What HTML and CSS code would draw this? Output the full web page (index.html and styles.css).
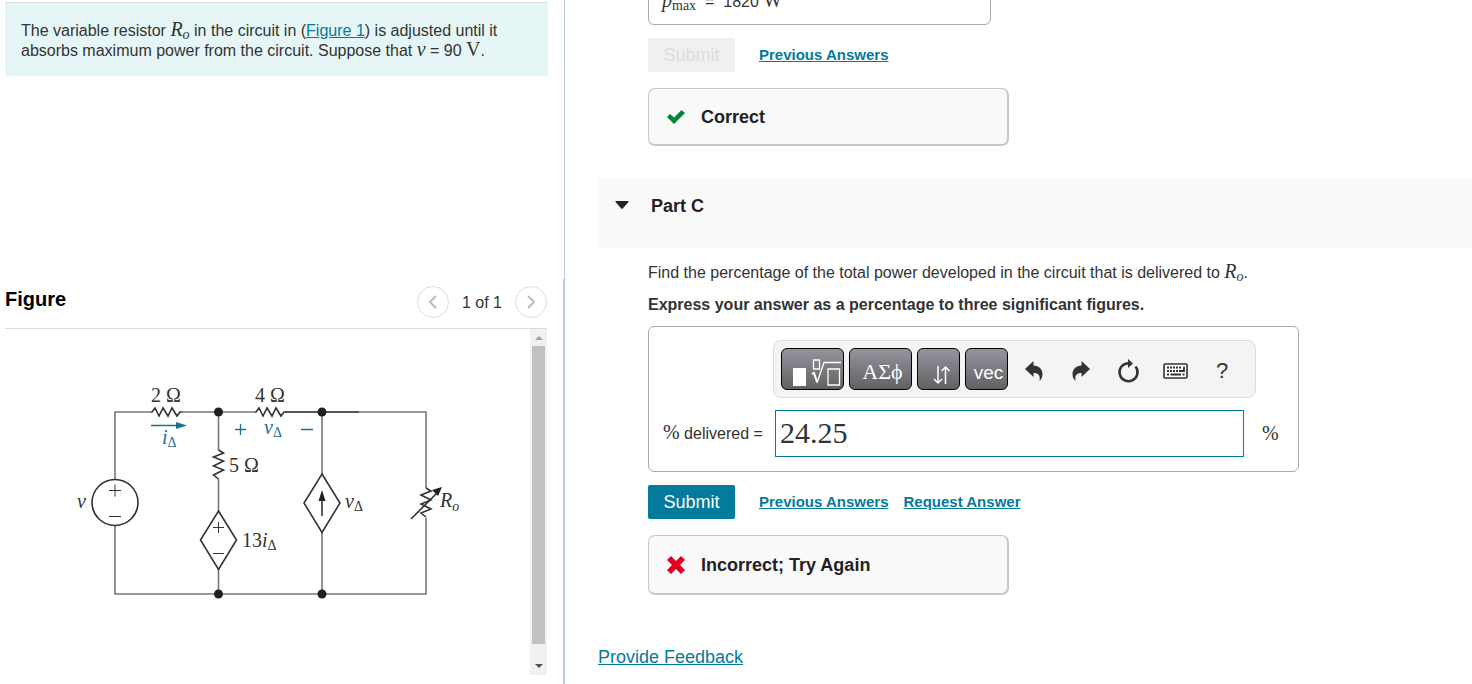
FILE: index.html
```html
<!DOCTYPE html>
<html lang="en">
<head>
    <meta charset="UTF-8">
    <meta name="viewport" content="width=device-width, initial-scale=1.0">
    <title>Maximum power transfer</title>
    <link rel="stylesheet" href="styles.css">
</head>
<body>
    <aside class="sidebar">
        <section class="intro-pane">
            <p class="intro">The variable resistor <span class="math"><i>R</i><sub>o</sub></span> in the circuit in (<a href="#figure">Figure 1</a>) is adjusted until it absorbs maximum power from the circuit. Suppose that <span class="math"><i>v</i></span> = 90 <span class="math">V</span>.</p>
        </section>

        <section class="figure-pane" id="figure">
            <div class="figure-header">
                <h2>Figure</h2>
                <div class="pager">
                    <button class="round" type="button" aria-label="Previous figure">
                        <svg width="10" height="14" viewBox="0 0 10 14"><path d="M8 1 2 7l6 6"/></svg>
                    </button>
                    <span>1 of 1</span>
                    <button class="round" type="button" aria-label="Next figure">
                        <svg width="10" height="14" viewBox="0 0 10 14"><path d="M2 1 8 7l-6 6"/></svg>
                    </button>
                </div>
            </div>
            <div class="figure-body">
                <svg class="circuit" width="525" height="346" viewBox="5 329 525 346" role="img" aria-label="Circuit diagram">
                    <!-- wires -->
                    <g class="wire">
                        <path d="M115 480V412H151"/>
                        <path d="M182 412H255M285 412H426V488M426 518V594H115V525"/>
                        <path d="M218.500 412V450M218.500 479V511M218.500 569V594"/>
                        <path d="M322 412V474M322 532V594"/>
                    </g>
                    <path class="wire-dark" d="M285 412H359"/>
                    <!-- resistors -->
                    <g class="part">
                        <path d="M151 412h1l3-4 4 8 4-8 5 8 4-8 5 8 3-4h2"/>
                        <path d="M255 412h1l3-4 4 8 4-8 5 8 4-8 5 8 3-4h2"/>
                        <path d="M218.500 450l5 3-10 4 10 4-10 5 10 4-10 5 5 4"/>
                        <path d="M426 488l5 3-10 4 10 5-10 4 10 5-10 4 5 4"/>
                    </g>
                    <!-- sources -->
                    <g class="part">
                        <circle cx="115" cy="502.500" r="23"/>
                        <path d="M218.500 511l18 29-18 29.500-18-29.500z"/>
                        <path d="M322 474l18 29-18 29.500-18-29.500z"/>
                    </g>
                    <path class="sign" d="M109 490.500h12M115 484.500v12M109 516.500h12M213 527.500h11M218.500 522v11M213 553.500h11"/>
                    <path class="part" d="M322 516v-16M411 519l26-26"/>
                    <path class="fill" d="M322 490l3.500 11h-7zM442 487l-4 9-6-6z"/>
                    <g class="fill">
                        <circle cx="218.500" cy="412" r="4.500"/>
                        <circle cx="322" cy="412" r="4.500"/>
                        <circle cx="218.500" cy="594" r="4.500"/>
                        <circle cx="322" cy="594" r="4.500"/>
                    </g>
                    <!-- current and voltage marks -->
                    <path class="blue-line" d="M151 425.500h27M235 429.500h11M240.500 424v11M301 429.500h12"/>
                    <path class="blue-fill" d="M187 425.500l-11-3.500v7z"/>
                    <g class="blue-fill">
                        <text x="162" y="444"><tspan class="it">i</tspan><tspan class="small" dy="3">Δ</tspan></text>
                        <text x="264" y="434"><tspan class="it">v</tspan><tspan class="small" dy="3">Δ</tspan></text>
                    </g>
                    <g class="label">
                        <text x="151" y="402">2 Ω</text>
                        <text x="255" y="402">4 Ω</text>
                        <text x="229" y="472">5 Ω</text>
                        <text x="242" y="547">13<tspan class="it">i</tspan><tspan class="small" dy="3">Δ</tspan></text>
                        <text x="77" y="508"><tspan class="it">v</tspan></text>
                        <text x="345" y="508"><tspan class="it">v</tspan><tspan class="small" dy="3">Δ</tspan></text>
                        <text x="440" y="507"><tspan class="it">R</tspan><tspan class="it small" dy="4">o</tspan></text>
                    </g>
                </svg>
                <div class="scrollbar">
                    <svg width="8" height="4" viewBox="0 0 8 4"><path fill="#a3a3a3" d="M0 4 4 0l4 4z"/></svg>
                    <div class="thumb"></div>
                    <svg width="8" height="4" viewBox="0 0 8 4"><path fill="#505050" d="M0 0h8L4 4z"/></svg>
                </div>
            </div>
        </section>
    </aside>

    <main class="content">
        <section class="part-body previous">
            <div class="answer-box done"><span class="math"><i>p</i><sub class="up">max</sub></span> &nbsp;= &nbsp;1820 <span class="math">W</span></div>
            <div class="actions">
                <button class="submit" type="button" disabled>Submit</button>
                <a href="#">Previous Answers</a>
            </div>
            <div class="status">
                <svg width="18" height="14" viewBox="0 0 18 14"><path fill="#008638" d="M0 7 3 4 7 7.500 14.500 0 18 3 7 14z"/></svg>
                <span>Correct</span>
            </div>
        </section>

        <header class="part-header">
            <svg width="14" height="8" viewBox="0 0 14 8"><path fill="#222" d="M1 0h12q1 0 .4.900L8 7.200q-1 1-2 0L.6.900Q0 0 1 0z"/></svg>
            <h2>Part C</h2>
        </header>

        <section class="part-body">
            <p class="question">Find the percentage of the total power developed in the circuit that is delivered to <span class="math"><i>R</i><sub>o</sub></span>.</p>
            <p class="instruction">Express your answer as a percentage to three significant figures.</p>
            <div class="answer-box editor">
                <div class="toolbar">
                    <button class="tool wide" type="button" aria-label="Templates">
                        <svg width="50" height="28" viewBox="0 0 50 28" fill="none" stroke="#fff" stroke-width="1.300">
                            <path fill="#fff" stroke="none" d="M5 10h13v18H5z"/>
                            <path d="M25.500 2h6v9h-6zM40 11h11.500v16H40zM29 25 36 4.500h17"/>
                            <path stroke-width="2" d="M24 16l2-1 3 9"/>
                        </svg>
                    </button>
                    <button class="tool wide greek" type="button">ΑΣϕ</button>
                    <button class="tool" type="button" aria-label="Arrows">
                        <svg class="arrows" width="18" height="20" viewBox="0 0 18 20" fill="none" stroke="#fff" stroke-width="1.500"><path d="M5 1v17M1 14l4 4 4-4M12.500 19V2M8.500 6l4-4 4 4"/></svg>
                    </button>
                    <button class="tool vec" type="button">vec</button>
                    <button class="plain" type="button" aria-label="Undo">
                        <svg width="18" height="20" viewBox="0 0 18 20"><path fill="#333" d="M0 8 8.500 0v4.500C14 5 17.500 8 17.500 13c0 3-1 5-3 7 1-5.500-1-8-6-8v4z"/></svg>
                    </button>
                    <button class="plain" type="button" aria-label="Redo">
                        <svg width="18" height="20" viewBox="0 0 18 20"><path fill="#333" d="M18 8 9.500 0v4.500C4 5 .5 8 .5 13c0 3 1 5 3 7-1-5.500 1-8 6-8v4z"/></svg>
                    </button>
                    <button class="plain" type="button" aria-label="Reset">
                        <svg width="22" height="24" viewBox="0 0 22 24"><path fill="none" stroke="#333" stroke-width="2.500" d="M12 4.200A9 9 0 1 0 18.500 7.500"/><path fill="#333" d="M11 0l5 4.500L11 9z"/></svg>
                    </button>
                    <button class="plain" type="button" aria-label="Keyboard">
                        <svg width="25" height="16" viewBox="0 0 25 16"><rect x="1" y="1" width="23" height="14" rx="1" fill="#fff" stroke="#333" stroke-width="1.600"/><path stroke="#333" stroke-width="1.800" stroke-dasharray="2 1" d="M4 4.500h15M4 8h15"/><path stroke="#333" stroke-width="1.800" d="M4 11.500h2M7.500 11.500H18M19.500 11.500h2M21 3.500v5.500M18 8h3"/></svg>
                    </button>
                    <button class="plain help" type="button">?</button>
                </div>
                <div class="answer-row">
                    <label for="answer"><span class="math">%</span> delivered =</label>
                    <input id="answer" type="text" value="24.25">
                    <span class="math unit">%</span>
                </div>
            </div>
            <div class="actions">
                <button class="submit" type="button">Submit</button>
                <a href="#">Previous Answers</a>
                <a href="#">Request Answer</a>
            </div>
            <div class="status tall">
                <svg width="18" height="18" viewBox="0 0 18 18"><path fill="#e1001e" d="M4 0 9 5l5-5 4 4-5 5 5 5-4 4-5-5-5 5-4-4 5-5-5-5z"/></svg>
                <span>Incorrect; Try Again</span>
            </div>
        </section>
        <a class="feedback" href="#">Provide Feedback</a>
    </main>
</body>
</html>
```
FILE: styles.css
```css
* {
    box-sizing: border-box;
}
body {
    margin: 0;
    display: flex;
    height: 100vh;
    overflow: hidden;
    font-family: "Liberation Sans", Arial, sans-serif;
    font-size: 16px;
    line-height: 20px;
    color: #333;
    background-color: #fff;
}
h2, p {
    margin: 0;
}
a {
    color: #047a9c;
}
button {
    font-family: inherit;
    border: none;
    cursor: pointer;
}
svg {
    flex: none;
    overflow: visible;
}
.math {
    font-family: "Liberation Serif", "Times New Roman", serif;
    font-size: 20px;
    line-height: 1px;
}
.math sub {
    font-size: 14px;
    font-style: italic;
    vertical-align: -3px;
    line-height: 1px;
}
.math .up {
    font-style: normal;
}

/* left side */
.sidebar {
    flex: none;
    width: 565px;
    display: flex;
    flex-direction: column;
}
.intro-pane {
    height: 279px;
    padding: 2px 16px 0 5px;
    border-right: 1px solid #b8cbdf;
}
.intro {
    padding: 18px 16px 15px;
    border-top: 1px solid #ddd;
    background-color: #e6f6f6;
}
.figure-pane {
    flex: 1;
    display: flex;
    flex-direction: column;
    padding: 0 16px 9px 5px;
    border-right: 2px solid #b8cbdf;
}
.figure-header {
    display: flex;
    justify-content: space-between;
    height: 50px;
    padding-top: 7px;
    border-bottom: 1px solid #ddd;
}
.figure-header h2 {
    font-size: 20px;
    line-height: 26px;
    color: #000;
}
.pager {
    display: flex;
    gap: 13px;
    line-height: 34px;
}
.round {
    display: flex;
    align-items: center;
    justify-content: center;
    width: 32px;
    height: 32px;
    padding: 0;
    border: 1px solid #ddd;
    border-radius: 50%;
    background-color: #fff;
}
.round path {
    fill: none;
    stroke: #bbb;
    stroke-width: 2;
}
.figure-body {
    flex: 1;
    display: flex;
    min-height: 0;
}
.scrollbar {
    flex: none;
    width: 17px;
    display: flex;
    flex-direction: column;
    align-items: center;
    padding: 7px 2px 7px;
    background-color: #f1f1f1;
}
.thumb {
    flex: 1;
    width: 13px;
    margin: 6px 0 20px;
    background-color: #c1c1c1;
}

/* circuit */
.circuit {
    font-family: "Liberation Serif", "Times New Roman", serif;
    font-size: 20px;
}
.wire, .wire-dark, .part, .sign, .blue-line {
    fill: none;
    stroke: #777;
    stroke-width: 1.6;
}
.wire-dark {
    stroke: #444;
}
.part {
    stroke: #333;
}
.sign {
    stroke-width: 1;
    stroke: #333;
}
.blue-line {
    stroke: #1d6f94;
    stroke-width: 1.3;
}
.blue-fill {
    fill: #1d6f94;
}
.fill {
    fill: #231f20;
}
.label {
    fill: #333;
}
.it {
    font-style: italic;
}
.small {
    font-size: 14px;
}

/* right side */
.content {
    flex: 1;
    padding-left: 33px;
}
.part-body {
    padding-left: 50px;
}
.previous {
    margin-top: -35px;
    padding-bottom: 32px;
}
.answer-box {
    border: 1px solid #aaa;
    border-radius: 6px;
}
.done {
    width: 343px;
    height: 60px;
    padding: 26px 13px 0;
}
.actions {
    display: flex;
    align-items: center;
    gap: 15px;
    margin: 13px 0 16px;
    font-size: 15px;
    font-weight: bold;
}
.submit {
    width: 87px;
    height: 34px;
    margin-right: 9px;
    padding: 0;
    border-radius: 2px;
    font-size: 18px;
    color: #fff;
    background-color: #047a9c;
}
.submit:disabled {
    color: #ddd;
    background-color: #f0f0f0;
}
.status {
    display: flex;
    align-items: center;
    gap: 16px;
    width: 361px;
    height: 58px;
    padding-left: 18px;
    border: 1px solid #c7c7c7;
    border-width: 1px 2px 2px 1px;
    border-radius: 7px;
    font-size: 18px;
    font-weight: bold;
    color: #222;
    background-color: #f9f9f9;
}
.tall {
    height: 60px;
}
.part-header {
    display: flex;
    gap: 22px;
    height: 70px;
    padding: 18px 0 0 17px;
    background-color: #f9f9f9;
}
.part-header svg {
    margin-top: 5px;
}
.part-header h2 {
    font-size: 18px;
    color: #222;
}
.question {
    margin-top: 15px;
}
.instruction {
    margin-top: 12px;
    font-weight: bold;
}
.editor {
    width: 651px;
    height: 146px;
    margin-top: 11px;
    padding: 13px 0 0 14px;
}
.toolbar {
    display: flex;
    align-items: center;
    gap: 5px;
    width: 483px;
    height: 58px;
    margin-left: 110px;
    padding: 0 7px;
    border: 1px solid #ddd;
    border-radius: 8px;
    background-color: #f4f4f4;
}
.tool {
    display: flex;
    align-items: center;
    justify-content: center;
    width: 43px;
    height: 42px;
    padding: 6px 0 0;
    border: 1px solid #000;
    border-radius: 6px;
    color: #fff;
    background-image: linear-gradient(#95939d, #626262);
}
.wide {
    width: 63px;
}
.greek {
    padding-left: 4px;
    font-family: "Liberation Serif", "Times New Roman", serif;
    font-size: 22px;
}
.arrows {
    margin: 6px 0 0 6px;
}
.vec {
    padding: 8px 0 0 4px;
    font-size: 19px;
}
.plain {
    display: flex;
    align-items: center;
    justify-content: center;
    width: 42px;
    height: 42px;
    padding: 4px 0 0;
    color: #333;
    background: none;
}
.help {
    font-size: 22px;
}
.answer-row {
    display: flex;
    align-items: center;
    margin-top: 12px;
}
.answer-row label {
    width: 112px;
}
.answer-row input {
    width: 469px;
    height: 47px;
    padding: 0 4px 2px;
    border: 1px solid #047a9c;
    font-family: "Liberation Serif", "Times New Roman", serif;
    font-size: 30px;
    color: #333;
}
.unit {
    margin-left: 18px;
}
.feedback {
    display: inline-block;
    margin-top: 52px;
    font-size: 18px;
}
```
